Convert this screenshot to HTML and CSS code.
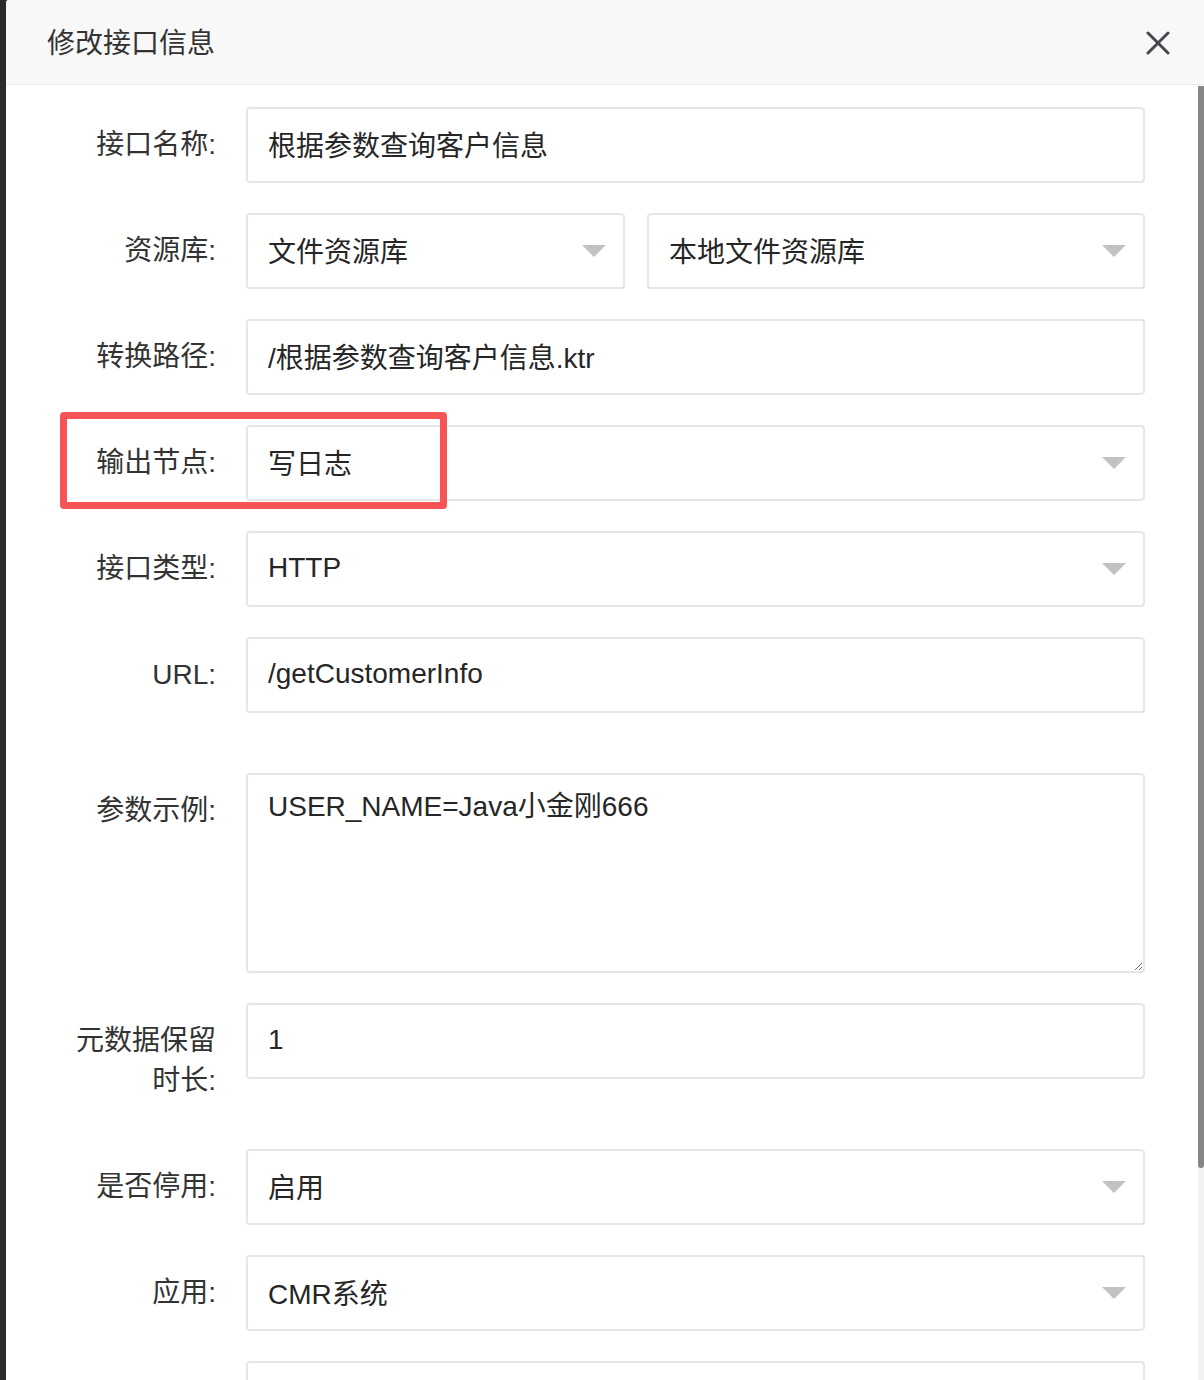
FILE: index.html
```html
<!DOCTYPE html>
<html lang="zh-CN">
<head>
<meta charset="utf-8">
<title>修改接口信息</title>
<link rel="stylesheet" href="styles.css">
</head>
<body>
<div class="backdrop">
  <div class="dialog">
    <div class="dialog-header">
      <span class="dialog-title">修改接口信息</span>
      <svg class="close-icon" width="24" height="24" viewBox="0 0 24 24"><path d="M2 2 L22 22 M22 2 L2 22" stroke="#474750" stroke-width="3" stroke-linecap="round" fill="none"/></svg>
    </div>
    <div class="dialog-body">
      <form class="form">
        <div class="form-row">
          <label class="form-label">接口名称:</label>
          <div class="field"><input class="input" type="text" value="根据参数查询客户信息"></div>
        </div>
        <div class="form-row">
          <label class="form-label">资源库:</label>
          <div class="field split">
            <div class="select narrow"><span>文件资源库</span><i class="edge"></i></div>
            <div class="select"><span>本地文件资源库</span><i class="edge"></i></div>
          </div>
        </div>
        <div class="form-row">
          <label class="form-label">转换路径:</label>
          <div class="field"><input class="input" type="text" value="/根据参数查询客户信息.ktr"></div>
        </div>
        <div class="form-row highlighted">
          <label class="form-label">输出节点:</label>
          <div class="field"><div class="select"><span>写日志</span><i class="edge"></i></div></div>
          <div class="red-mark"></div>
        </div>
        <div class="form-row">
          <label class="form-label">接口类型:</label>
          <div class="field"><div class="select"><span>HTTP</span><i class="edge"></i></div></div>
        </div>
        <div class="form-row">
          <label class="form-label">URL:</label>
          <div class="field"><input class="input" type="text" value="/getCustomerInfo"></div>
        </div>
        <div class="form-row text-row">
          <label class="form-label">参数示例:</label>
          <div class="field"><textarea class="textarea">USER_NAME=Java小金刚666</textarea></div>
        </div>
        <div class="form-row">
          <label class="form-label">元数据保留时长:</label>
          <div class="field"><input class="input" type="text" value="1"></div>
        </div>
        <div class="form-row">
          <label class="form-label">是否停用:</label>
          <div class="field"><div class="select"><span>启用</span><i class="edge"></i></div></div>
        </div>
        <div class="form-row">
          <label class="form-label">应用:</label>
          <div class="field"><div class="select"><span>CMR系统</span><i class="edge"></i></div></div>
        </div>
        <div class="form-row">
          <label class="form-label"></label>
          <div class="field"><input class="input" type="text" value=""></div>
        </div>
      </form>
    </div>
    <div class="scrollbar"><div class="thumb"></div></div>
  </div>
</div>
</body>
</html>
```

FILE: styles.css
```css
* { box-sizing: border-box; }
html, body {
  margin: 0;
  padding: 0;
  height: 1380px;
  overflow: hidden;
  background: #2a2a2a;
  font-family: "Liberation Sans", "Noto Sans CJK SC", sans-serif;
}
.backdrop {
  height: 1380px;
  padding-left: 6px;
}
.dialog {
  position: relative;
  height: 1380px;
  background: #fff;
  border-top-left-radius: 3px;
  overflow: hidden;
}
.dialog-header {
  height: 85px;
  background: #f8f8f8;
  border-bottom: 1px solid #ececec;
  display: flex;
  align-items: center;
  justify-content: space-between;
  padding: 0 34px 0 41px;
}
.dialog-title {
  font-size: 28px;
  color: #333;
  line-height: 84px;
  margin-top: 3px;
}
.close-icon { display: block; margin-top: 2px; }
.dialog-body {
  padding: 22px 59px 0 60px;
}
.form-row {
  display: flex;
  align-items: flex-start;
  margin-bottom: 30px;
  position: relative;
}
.form-label {
  flex: 0 0 150px;
  width: 150px;
  padding: 18px 0;
  margin-right: 30px;
  text-align: right;
  font-size: 28px;
  line-height: 40px;
  color: #333;
}
.field {
  flex: 1;
  min-width: 0;
}
.field.split {
  display: flex;
  gap: 22px;
}
.input, .select, .textarea {
  display: block;
  width: 100%;
  height: 76px;
  border: 2px solid #e6e6e6;
  border-radius: 4px;
  background: #fff;
  padding: 0 20px 3px;
  font-family: "Liberation Sans", "Noto Sans CJK SC", sans-serif;
  font-size: 28px;
  color: #262626;
  outline: none;
}
.select {
  display: flex;
  align-items: center;
  justify-content: space-between;
  flex: 1;
}
.select.narrow { flex: 0 0 379px; }
.edge {
  display: block;
  width: 0;
  height: 0;
  border-left: 12px solid transparent;
  border-right: 12px solid transparent;
  border-top: 12px solid #c2c2c2;
  margin-right: -3px;
  margin-top: 2px;
}
.text-row { margin-top: 60px; }
.textarea {
  height: 200px;
  padding: 12px 20px;
  line-height: 40px;
  resize: vertical;
}
.red-mark {
  position: absolute;
  left: -6px;
  top: -13px;
  width: 387px;
  height: 97px;
  border: 7px solid #f75555;
  border-radius: 4px;
  pointer-events: none;
}
.scrollbar {
  position: absolute;
  right: 0;
  top: 86px;
  bottom: 0;
  width: 6px;
  background: #f2f2f2;
}
.thumb {
  height: 1082px;
  background: #868686;
  border-radius: 0 0 3px 3px;
}
```
